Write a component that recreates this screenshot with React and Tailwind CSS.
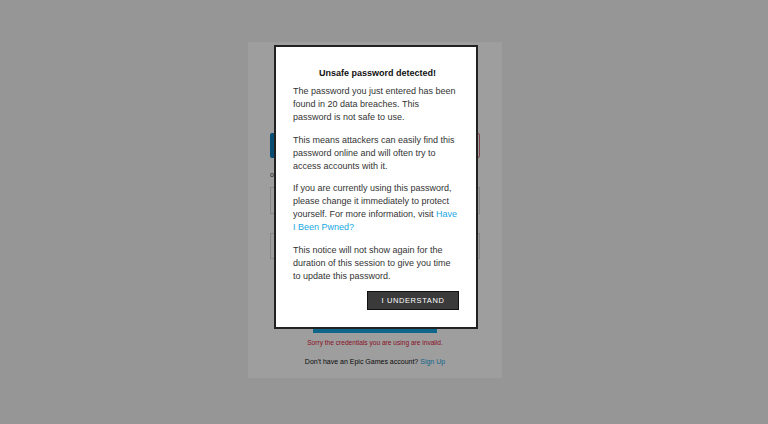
import React from "react";

export default function App() {
  return (
    <div
      className="relative w-[768px] h-[424px] overflow-hidden bg-[#f2f2f2]"
      style={{ fontFamily: '"Liberation Sans", Arial, sans-serif' }}
    >
      {/* Login card behind */}
      <div className="absolute left-[248px] top-[42px] w-[254px] h-[336px] bg-white px-[22px] pt-[30px] flex flex-col">
        <div className="h-[44px]" />
        <div className="mt-[17px] flex gap-[8px]">
          <div className="h-[25px] w-[100px] bg-[#0f7fb8] rounded-[2px]" />
          <div className="h-[25px] flex-1 border border-[#d9707f] rounded-[2px]" />
        </div>
        <div className="mt-[12px] text-[7px] text-[#333]">or</div>
        <div className="mt-[6px] h-[27px] border border-[#d8d8d8]" />
        <div className="mt-[19px] h-[26px] border border-[#d8d8d8]" />
        <div className="mt-[44px] mx-auto w-[124px] h-[30px] bg-[#18a7e0]" />
        <div className="mt-[5px] text-center text-[6.6px] text-[#e0203a]">
          Sorry the credentials you are using are invalid.
        </div>
        <div className="mt-[10px] text-center text-[7px] text-[#111]">
          Don't have an Epic Games account? <span className="text-[#18a7e0]">Sign Up</span>
        </div>
      </div>

      {/* Overlay */}
      <div className="absolute inset-0 bg-black/[0.38]" />

      {/* Modal */}
      <div className="absolute left-[274px] top-[45px] w-[204px] h-[284px] bg-white border-2 border-[#222] pl-[17px] pr-[18px] pt-[20px] text-[#333]">
        <div className="text-center font-bold text-[9px] leading-[12px] text-[#111] -mr-[4px]">
          Unsafe password detected!
        </div>
        <p className="mt-[6px] text-[9px] leading-[13px]">
          The password you just entered has been found in 20 data breaches. This password is not safe to use.
        </p>
        <p className="mt-[10px] text-[9px] leading-[13px]">
          This means attackers can easily find this password online and will often try to access accounts with it.
        </p>
        <p className="mt-[9px] text-[9px] leading-[13px]">
          If you are currently using this password, please change it immediately to protect yourself. For more information, visit{" "}
          <span className="text-[#18a7e0]">Have I Been Pwned?</span>
        </p>
        <p className="mt-[10px] text-[9px] leading-[13px]">
          This notice will not show again for the duration of this session to give you time to update this password.
        </p>
        <div className="mt-[8px] flex justify-end -mr-[1px]">
          <div className="w-[92px] h-[19px] bg-[#3a3a3a] border border-[#111] flex items-center justify-center text-white text-[7.5px] tracking-[0.08em]">
            I UNDERSTAND
          </div>
        </div>
      </div>
    </div>
  );
}
